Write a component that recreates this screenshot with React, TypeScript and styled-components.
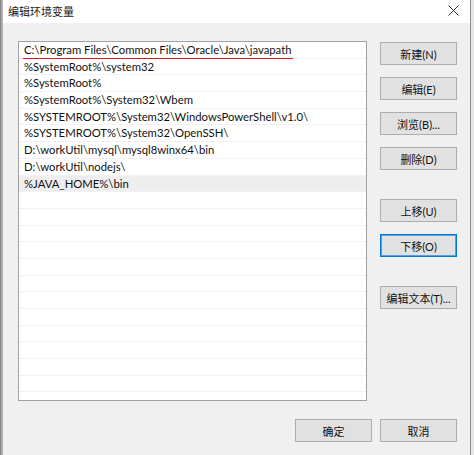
import styled, { createGlobalStyle } from 'styled-components';

const GlobalStyle = createGlobalStyle`
  html, body {
    margin: 0;
    padding: 0;
    background: #ffffff;
  }
  body {
    font-family: Lato, "Noto Sans CJK SC", sans-serif;
    color: #000;
  }
`;

const paths = [
  'C:\\Program Files\\Common Files\\Oracle\\Java\\javapath',
  '%SystemRoot%\\system32',
  '%SystemRoot%',
  '%SystemRoot%\\System32\\Wbem',
  '%SYSTEMROOT%\\System32\\WindowsPowerShell\\v1.0\\',
  '%SYSTEMROOT%\\System32\\OpenSSH\\',
  'D:\\workUtil\\mysql\\mysql8winx64\\bin',
  'D:\\workUtil\\nodejs\\',
  '%JAVA_HOME%\\bin',
];

const TOTAL_ROWS = 22;

const App = () => {
  const rows = Array.from({ length: TOTAL_ROWS }, (_, i) => paths[i] ?? '');

  return (
    <>
      <GlobalStyle />
      <Screen>
        <Window>
          <TitleBar>
            <Title>编辑环境变量</Title>
            <CloseButton>
              <svg width="11" height="11" viewBox="0 0 11 11">
                <path d="M0.5 0.5 L10.5 10.5 M10.5 0.5 L0.5 10.5" stroke="#333" strokeWidth="1" />
              </svg>
            </CloseButton>
          </TitleBar>
          <Body>
            <Content>
              <ListBox>
                {rows.map((text, i) => (
                  <Row key={i} $selected={i === 8}>
                    {i === 0 ? <Underlined>{text}</Underlined> : text}
                  </Row>
                ))}
              </ListBox>
              <ButtonColumn>
                <Button>新建(N)</Button>
                <Button $gap={12}>编辑(E)</Button>
                <Button $gap={12}>浏览(B)...</Button>
                <Button $gap={12}>删除(D)</Button>
                <Button $gap={29}>上移(U)</Button>
                <Button $gap={12} $focused>下移(O)</Button>
                <Button $gap={29}>编辑文本(T)...</Button>
              </ButtonColumn>
            </Content>
            <Footer>
              <Button>确定</Button>
              <Button>取消</Button>
            </Footer>
          </Body>
        </Window>
        <Edge />
      </Screen>
    </>
  );
};

const Screen = styled.div`
  width: 474px;
  height: 455px;
  display: flex;
  overflow: hidden;
  background: linear-gradient(to right, #7a7a7a 0, #b5b5b5 2px, #b5b5b5 3px);
`;

const Window = styled.div`
  margin-left: 3px;
  width: 467px;
  height: 455px;
  display: flex;
  flex-direction: column;
  background: #f0f0f0;
  border-right: 1px solid #8d8d8d;
`;

const Edge = styled.div`
  flex: 1;
  background: #e6e6e6;
`;

const TitleBar = styled.div`
  height: 23px;
  background: #ffffff;
  display: flex;
  align-items: center;
  justify-content: space-between;
  padding: 0 11px 0 5px;
  flex-shrink: 0;
`;

const Title = styled.span`
  font-family: "Noto Sans CJK SC", sans-serif;
  font-size: 11px;
  color: #1a1a1a;
  margin-top: -2px;
`;

const CloseButton = styled.span`
  display: flex;
  align-items: center;
  margin-top: -3px;
`;

const Body = styled.div`
  flex: 1;
  display: flex;
  flex-direction: column;
  padding: 18px 13px 0 15px;
`;

const Content = styled.div`
  display: flex;
  gap: 13px;
`;

const ListBox = styled.div`
  width: 348px;
  height: 358px;
  border: 1px solid #a0a0a0;
  background: #ffffff;
  overflow: hidden;
`;

const Row = styled.div<{ $selected?: boolean }>`
  height: 16.7px;
  box-sizing: border-box;
  border-bottom: 1px solid #f2f2f2;
  background: ${(p) => (p.$selected ? '#eeeeee' : 'transparent')};
  padding-left: 5px;
  font-size: 11.3px;
  line-height: 15.7px;
  white-space: nowrap;
  color: #111;
`;

const Underlined = styled.span`
  display: inline-block;
  padding: 0 1px;
  margin-left: -1px;
  border-bottom: 1.5px solid #e2141c;
  line-height: 14.5px;
`;

const ButtonColumn = styled.div`
  display: flex;
  flex-direction: column;
  padding-top: 1px;
`;

const Button = styled.div<{ $gap?: number; $focused?: boolean }>`
  width: 77px;
  height: 23px;
  box-sizing: border-box;
  margin-top: ${(p) => p.$gap ?? 0}px;
  background: #e1e1e1;
  border: 1px solid ${(p) => (p.$focused ? '#0078d7' : '#adadad')};
  box-shadow: ${(p) => (p.$focused ? 'inset 0 0 0 1px #5aa0e0' : 'none')};
  display: flex;
  align-items: center;
  justify-content: center;
  font-size: 11px;
  color: #111;
  white-space: nowrap;
`;

const Footer = styled.div`
  display: flex;
  justify-content: flex-end;
  gap: 8px;
  margin-top: 18px;
`;

export default App;
